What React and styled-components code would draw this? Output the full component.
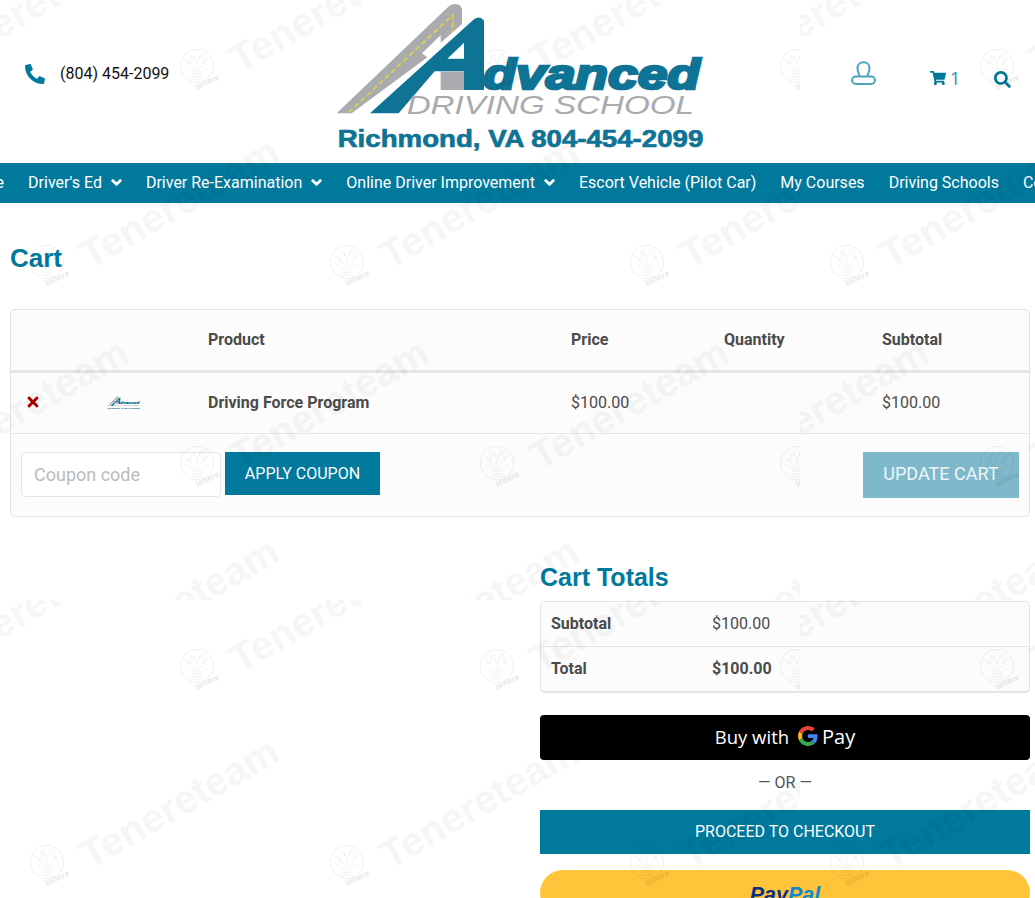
import styled, { createGlobalStyle } from 'styled-components';
import { FaChevronDown, FaPhoneAlt, FaSearch, FaShoppingCart, FaTimes } from 'react-icons/fa';

const TEAL = '#00799c';
const TEXT = '#4b4b4b';

const navItems = [
  { label: 'Home' },
  { label: "Driver's Ed", caret: true },
  { label: 'Driver Re-Examination', caret: true },
  { label: 'Online Driver Improvement', caret: true },
  { label: 'Escort Vehicle (Pilot Car)' },
  { label: 'My Courses' },
  { label: 'Driving Schools' },
  { label: 'Contact' },
];

const markRows = [
  { y: 66, xs: [-103, 197, 497, 797] },
  { y: 262, xs: [47, 347, 647] },
  { y: 463, xs: [-103, 197, 497, 797] },
  { y: 662, xs: [47, 347, 647] },
];

function Logo({ width }) {
  return (
    <LogoSvg $width={width} viewBox="0 0 1200 480">
      <path
        d="M50 340 L385 20 Q398 8 416 14 Q426 18 426 32 L426 72 L362 128 L362 106 L306 160 L322 172 L95 340 Z"
        fill="#a9abae"
      />
      <path d="M86 338 L398 45 L398 96" fill="none" stroke="#e2d443" strokeWidth="5" strokeDasharray="16 9" />
      <path d="M362 215 H432 V270 H362 Z" fill="#a9abae" />
      <path
        d="M150 340 L462 58 Q480 46 492 62 L492 270 L432 270 L432 214 L344 214 L236 340 Z M432 128 L432 176 L382 176 Z"
        fill="#0f7395"
        fillRule="evenodd"
      />
      <text
        x="490"
        y="268"
        textLength="650"
        lengthAdjust="spacingAndGlyphs"
        fontFamily="'Liberation Sans', sans-serif"
        fontSize="128"
        fontWeight="700"
        fontStyle="italic"
        fill="#0f7395"
        stroke="#0f7395"
        strokeWidth="8"
      >
        dvanced
      </text>
      <text
        x="260"
        y="343"
        textLength="862"
        lengthAdjust="spacingAndGlyphs"
        fontFamily="'Liberation Sans', sans-serif"
        fontSize="80"
        fontStyle="italic"
        fill="#a9abae"
      >
        DRIVING SCHOOL
      </text>
      <text
        x="53"
        y="440"
        textLength="1097"
        lengthAdjust="spacingAndGlyphs"
        fontFamily="'Liberation Sans', sans-serif"
        fontSize="70"
        fontWeight="700"
        fill="#0f7395"
        stroke="#0f7395"
        strokeWidth="2"
      >
        Richmond, VA 804-454-2099
      </text>
    </LogoSvg>
  );
}

function UserIcon() {
  return (
    <UserGlyph width="25" height="24" viewBox="0 0 25 24" fill="none" stroke="#4fa3bb" strokeWidth="2">
      <path d="M8.5 15.5 C8.5 13 6.5 11 6.5 7.5 C6.5 3.5 9 1.2 12.5 1.2 C16 1.2 18.5 3.5 18.5 7.5 C18.5 11 16.5 13 16.5 15.5" />
      <rect x="1" y="15.5" width="23" height="7.5" rx="3.75" />
    </UserGlyph>
  );
}

function GoogleG() {
  return (
    <svg width="20" height="20" viewBox="0 0 48 48">
      <path fill="#EA4335" d="M24 9.5c3.5 0 6.7 1.2 9.2 3.6l6.9-6.9C35.9 2.4 30.5 0 24 0 14.6 0 6.5 5.4 2.6 13.2l8 6.2C12.5 13.7 17.8 9.5 24 9.5z" />
      <path fill="#4285F4" d="M46.9 24.5c0-1.6-.1-3.1-.4-4.5H24v9h12.9c-.6 3-2.2 5.5-4.7 7.2l7.7 6c4.5-4.2 7-10.3 7-17.7z" />
      <path fill="#FBBC05" d="M10.6 28.6c-.5-1.4-.8-3-.8-4.6s.3-3.2.8-4.6l-8-6.2C.9 16.5 0 20.1 0 24s.9 7.5 2.6 10.8l8-6.2z" />
      <path fill="#34A853" d="M24 48c6.5 0 11.9-2.1 15.9-5.8l-7.7-6c-2.2 1.4-4.9 2.3-8.2 2.3-6.2 0-11.5-4.2-13.4-9.9l-8 6.2C6.5 42.6 14.6 48 24 48z" />
    </svg>
  );
}

function TreeMark({ x, y }) {
  return (
    <g transform={`translate(${x} ${y})`}>
      <circle r="16.5" fill="none" stroke="rgba(0,0,0,.1)" strokeWidth="1" strokeDasharray="1.2 1" />
      <path
        d="M-2 14 L-2 4 L-10 -5 M2 14 L2 3 L10 -6 M-5 14 L-4 6 L-12 1 M5 14 L4 6 L12 2 M0 14 V-2 L-4 -12 M0 -2 L4 -13 M-7 -2 L-12 -6 M-7 -2 L-6 -10 M7 -3 L12 -8 M7 -3 L7 -11 M-2 -7 L-8 -12 M2 -8 L8 -13"
        fill="none"
        stroke="rgba(0,0,0,.08)"
        strokeWidth="1"
        strokeDasharray="1.3 1.3"
      />
      <text
        x="0"
        y="24"
        transform="rotate(-25 0 24)"
        fontFamily="'Liberation Sans', sans-serif"
        fontSize="8.5"
        fontWeight="700"
        fill="rgba(0,0,0,.1)"
      >
        tenere
      </text>
      <text
        x="43"
        y="8"
        transform="rotate(-30 43 8)"
        fontFamily="'Liberation Sans', sans-serif"
        fontSize="40"
        fontWeight="700"
        fill="rgba(0,0,0,.036)"
      >
        Tenereteam
      </text>
    </g>
  );
}

function Watermark() {
  return (
    <WatermarkLayer aria-hidden="true">
      <defs>
        <pattern id="tenere-tile" width="800" height="600" patternUnits="userSpaceOnUse">
          {markRows.map((row) => row.xs.map((x) => <TreeMark key={`${x}-${row.y}`} x={x} y={row.y} />))}
        </pattern>
      </defs>
      <rect width="100%" height="100%" fill="url(#tenere-tile)" />
    </WatermarkLayer>
  );
}

export default function App() {
  return (
    <>
      <GlobalStyle />
      <Page>
        <Header>
          <PhoneBlock>
            <FaPhoneAlt size={20} color={TEAL} />
            <PhoneNumber>(804) 454-2099</PhoneNumber>
          </PhoneBlock>
          <Logo width={400} />
          <HeaderIcons>
            <UserIcon />
            <CartLink>
              <FaShoppingCart size={16} />
              <CartCount>1</CartCount>
            </CartLink>
            <SearchLink>
              <FaSearch size={17} />
            </SearchLink>
          </HeaderIcons>
        </Header>

        <NavBar>
          <NavTrack>
            {navItems.map((item) => (
              <NavItem key={item.label}>
                {item.label}
                {item.caret && <FaChevronDown size={11} stroke="currentColor" strokeWidth={50} />}
              </NavItem>
            ))}
          </NavTrack>
        </NavBar>

        <Main>
          <Title>Cart</Title>
          <CartBox>
            <CartTable>
              <colgroup>
                <col width="85" />
                <col width="102" />
                <col width="363" />
                <col width="153" />
                <col width="158" />
                <col width="157" />
              </colgroup>
              <thead>
                <tr>
                  <HeadCell />
                  <HeadCell />
                  <HeadCell>Product</HeadCell>
                  <HeadCell>Price</HeadCell>
                  <HeadCell>Quantity</HeadCell>
                  <HeadCell>Subtotal</HeadCell>
                </tr>
              </thead>
              <tbody>
                <tr>
                  <BodyCell>
                    <RemoveLink>
                      <FaTimes size={16} />
                    </RemoveLink>
                  </BodyCell>
                  <BodyCell>
                    <Logo width={35} />
                  </BodyCell>
                  <BodyCell $strong>Driving Force Program</BodyCell>
                  <BodyCell>$100.00</BodyCell>
                  <BodyCell />
                  <BodyCell>$100.00</BodyCell>
                </tr>
              </tbody>
            </CartTable>
            <CartActions>
              <CouponInput placeholder="Coupon code" />
              <ApplyButton>APPLY COUPON</ApplyButton>
              <UpdateButton>UPDATE CART</UpdateButton>
            </CartActions>
          </CartBox>

          <TotalsColumn>
            <TotalsTitle>Cart Totals</TotalsTitle>
            <TotalsBox>
              <TotalsRow>
                <TotalsLabel>Subtotal</TotalsLabel>
                <span>$100.00</span>
              </TotalsRow>
              <TotalsRow>
                <TotalsLabel>Total</TotalsLabel>
                <TotalsLabel>$100.00</TotalsLabel>
              </TotalsRow>
            </TotalsBox>
            <GooglePayButton>
              Buy with
              <GooglePayMark>
                <GoogleG />
                Pay
              </GooglePayMark>
            </GooglePayButton>
            <OrDivider>— OR —</OrDivider>
            <CheckoutButton>PROCEED TO CHECKOUT</CheckoutButton>
            <PayPalButton>
              <PayPalWord $light={false}>Pay</PayPalWord>
              <PayPalWord $light>Pal</PayPalWord>
            </PayPalButton>
          </TotalsColumn>
        </Main>
      </Page>
      <Watermark />
    </>
  );
}

const GlobalStyle = createGlobalStyle`
  html, body {
    margin: 0;
    height: 898px;
    overflow: hidden;
    background: #fff;
  }
  body {
    font-family: Roboto, 'Liberation Sans', sans-serif;
    font-size: 16px;
    color: ${TEXT};
  }
  * {
    box-sizing: border-box;
  }
`;

const Page = styled.div`
  width: 1035px;
`;

const WatermarkLayer = styled.svg`
  position: fixed;
  top: 0;
  left: 0;
  width: 100%;
  height: 100%;
  pointer-events: none;
  z-index: 10;
`;

const Header = styled.header`
  display: flex;
  height: 163px;
`;

const LogoSvg = styled.svg`
  display: block;
  flex: none;
  width: ${(p) => p.$width}px;
  height: ${(p) => (p.$width * 2) / 5}px;
`;

const PhoneBlock = styled.div`
  width: 320px;
  display: flex;
  align-items: center;
  gap: 15px;
  padding: 0 0 16px 25px;
`;

const PhoneNumber = styled.span`
  color: #111;
`;

const HeaderIcons = styled.div`
  flex: 1;
  display: flex;
  align-items: center;
  padding: 0 0 14px 131px;
`;

const UserGlyph = styled.svg`
  flex: none;
  margin-bottom: 4px;
`;

const CartLink = styled.div`
  display: flex;
  align-items: center;
  gap: 4px;
  margin: 6px 34px 0 54px;
  color: ${TEAL};
`;

const CartCount = styled.span`
  font-family: 'Open Sans', sans-serif;
  font-size: 18px;
  line-height: 20px;
  color: #2a8dab;
`;

const SearchLink = styled.div`
  display: flex;
  margin-top: 10px;
  color: ${TEAL};
`;

const NavBar = styled.nav`
  height: 40px;
  background: ${TEAL};
  overflow: hidden;
`;

const NavTrack = styled.ul`
  display: flex;
  height: 100%;
  margin: 0 0 0 -51px;
  padding: 0 0 2px;
  list-style: none;
`;

const NavItem = styled.li`
  display: flex;
  align-items: center;
  flex: none;
  gap: 9px;
  padding: 0 12px;
  color: #fff;
  white-space: nowrap;
`;

const Main = styled.main`
  padding: 0 5px 0 10px;
`;

const Title = styled.h1`
  margin: 0;
  padding-top: 39px;
  height: 106px;
  font-family: 'Liberation Sans', sans-serif;
  font-size: 26px;
  line-height: 32px;
  font-weight: 700;
  color: ${TEAL};
`;

const CartBox = styled.div`
  height: 208px;
  border: 1px solid #e4e4e4;
  border-radius: 5px;
  background: #fcfcfc;
`;

const CartTable = styled.table`
  width: 100%;
  table-layout: fixed;
  border-collapse: collapse;
`;

const HeadCell = styled.th`
  height: 61px;
  padding: 0 0 1px 10px;
  border-bottom: 3px solid #e6e6e6;
  text-align: left;
  font-weight: 700;
  font-size: 16px;
`;

const BodyCell = styled.td`
  height: 62px;
  padding: 0 0 0 10px;
  border-bottom: 1px solid #e6e6e6;
  font-weight: ${(p) => (p.$strong ? 700 : 400)};
`;

const RemoveLink = styled.span`
  display: inline-flex;
  padding: 3px 0 0 4px;
  color: #a00;
`;

const CartActions = styled.div`
  display: flex;
  align-items: flex-start;
  gap: 4px;
  padding: 18px 10px 0;
`;

const CouponInput = styled.input`
  width: 200px;
  height: 45px;
  padding: 0 12px;
  border: 1px solid #e6e6e6;
  border-radius: 4px;
  background: #fff;
  font-family: inherit;
  font-size: 18px;
  &::placeholder {
    color: #bbb;
    opacity: 1;
  }
`;

const FlatButton = styled.button`
  border: 0;
  background: ${TEAL};
  color: #fff;
  font-family: inherit;
  padding: 0;
`;

const ApplyButton = styled(FlatButton)`
  width: 155px;
  height: 43px;
  font-size: 16px;
`;

const UpdateButton = styled(FlatButton)`
  width: 156px;
  height: 46px;
  margin-left: auto;
  padding-bottom: 3px;
  background: #7fb8ca;
  color: #eef6f8;
  font-size: 18px;
`;

const TotalsColumn = styled.section`
  width: 490px;
  margin: 42px 0 0 530px;
`;

const TotalsTitle = styled.h2`
  margin: 0 0 6px;
  font-family: 'Liberation Sans', sans-serif;
  font-size: 25px;
  line-height: 36px;
  font-weight: 700;
  color: ${TEAL};
`;

const TotalsBox = styled.div`
  border: 1px solid #e4e4e4;
  border-bottom-width: 2px;
  border-radius: 5px;
  background: #fcfcfc;
`;

const TotalsRow = styled.div`
  display: grid;
  grid-template-columns: 161px 1fr;
  align-items: center;
  height: 44px;
  padding: 0 0 2px 10px;
  & + & {
    height: 45px;
    border-top: 1px solid #e4e4e4;
  }
`;

const TotalsLabel = styled.span`
  font-weight: 700;
`;

const GooglePayButton = styled.div`
  display: flex;
  align-items: center;
  justify-content: center;
  gap: 9px;
  height: 45px;
  margin-top: 22px;
  padding-bottom: 3px;
  border-radius: 4px;
  background: #000;
  color: #fff;
  font-family: 'Open Sans', sans-serif;
  font-size: 18.5px;
`;

const GooglePayMark = styled.span`
  display: flex;
  align-items: center;
  gap: 4px;
  font-size: 20px;
`;

const OrDivider = styled.div`
  height: 50px;
  line-height: 46px;
  text-align: center;
  color: #555;
`;

const CheckoutButton = styled(FlatButton)`
  display: block;
  width: 100%;
  height: 44px;
  padding-bottom: 2px;
  font-size: 16px;
`;

const PayPalButton = styled.div`
  display: flex;
  justify-content: center;
  height: 46px;
  margin-top: 16px;
  padding-top: 11px;
  border-radius: 23px;
  background: #ffc439;
  font-family: 'Liberation Sans', sans-serif;
  font-size: 21.5px;
  line-height: 28px;
  font-weight: 700;
  font-style: italic;
`;

const PayPalWord = styled.span`
  color: ${(p) => (p.$light ? '#0a8ad0' : '#0a2f86')};
`;
